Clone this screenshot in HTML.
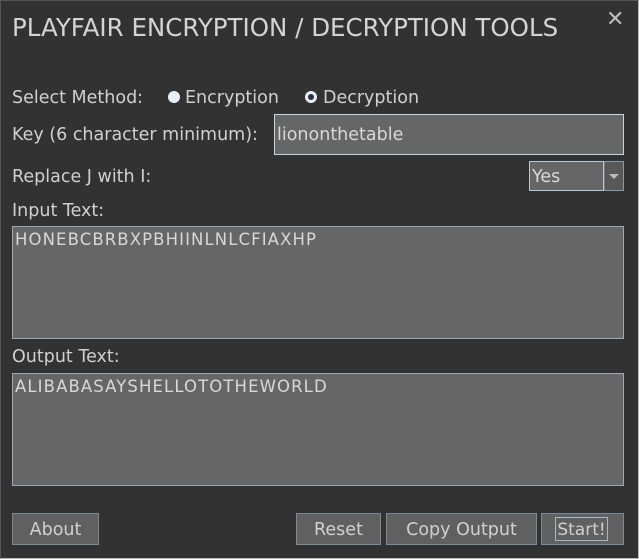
<!DOCTYPE html>
<html><head><style>
*{margin:0;padding:0;box-sizing:border-box}
html,body{width:639px;height:559px}
body{background:#323232;font-family:"DejaVu Sans","Liberation Sans",sans-serif;color:#d0d0d0;position:relative;overflow:hidden}
.frame{position:absolute;left:0;top:0;width:639px;height:559px;border:1px solid #555;border-right-color:#bbb;border-bottom-color:#bbb}
.a{position:absolute;white-space:nowrap}
.lbl{font-size:17.5px}
.box{position:absolute;background:#666;border:1px solid #9aaabb;color:#d8d8d8;font-size:17.5px}
.btn{position:absolute;background:#606060;border:1px solid #7a8a9a;font-size:17.5px;text-align:center;line-height:32px;color:#d0d0d0}
</style></head><body>
<div class="frame"></div>
<div class="a" style="left:12px;top:13px;font-size:24.5px;color:#d4d4d4">PLAYFAIR ENCRYPTION / DECRYPTION TOOLS</div>
<div class="a" style="left:606px;top:7px;font-size:22px;font-weight:bold;color:#bbb">✕</div>
<div class="a lbl" style="left:12px;top:88px">Select Method:</div>
<div class="a" style="left:168px;top:91px;width:12px;height:12px;border-radius:50%;background:#e8eef6"></div>
<div class="a lbl" style="left:185px;top:88px">Encryption</div>
<div class="a" style="left:305px;top:91px;width:12px;height:12px;border-radius:50%;background:#e8eef6"></div>
<div class="a" style="left:308px;top:94px;width:6px;height:6px;border-radius:50%;background:#2a3040"></div>
<div class="a lbl" style="left:323px;top:88px">Decryption</div>
<div class="a lbl" style="left:12px;top:125px">Key (6 character minimum):</div>
<div class="box" style="left:274px;top:114px;width:350px;height:41px;border-color:#c8d4e0;padding:10px 0 0 2px">liononthetable</div>
<div class="a lbl" style="left:12px;top:167px">Replace J with I:</div>
<div class="box" style="left:529px;top:161px;width:95px;height:30px;border-color:#8a9ab0;padding:5px 0 0 2px">Yes</div>
<div class="a" style="left:529px;top:161px;width:75px;height:30px;border:1px solid #b8c8dc"></div>
<div class="a" style="left:604px;top:162px;width:19px;height:28px;background:#585858;border-left:1px solid #777"></div>
<div class="a" style="left:609px;top:174px;border-left:5px solid transparent;border-right:5px solid transparent;border-top:5px solid #bbb"></div>
<div class="a lbl" style="left:12px;top:201px">Input Text:</div>
<div class="box" style="left:12px;top:226px;width:612px;height:113px;padding:3px 0 0 2px;font-size:16.5px;letter-spacing:1.1px">HONEBCBRBXPBHIINLNLCFIAXHP</div>
<div class="a lbl" style="left:12px;top:347px">Output Text:</div>
<div class="box" style="left:12px;top:373px;width:612px;height:113px;padding:3px 0 0 2px;font-size:16.5px;letter-spacing:1.1px">ALIBABASAYSHELLOTOTHEWORLD</div>
<div class="btn" style="left:12px;top:513px;width:87px;height:32px">About</div>
<div class="btn" style="left:296px;top:513px;width:85px;height:32px">Reset</div>
<div class="btn" style="left:386px;top:513px;width:151px;height:32px">Copy Output</div>
<div class="btn" style="left:541px;top:513px;width:83px;height:32px"></div>
<div class="a" style="left:555px;top:517px;width:53px;height:24px;border:1px solid #a8b8cc;font-size:17px;text-align:center;line-height:24px">Start!</div>
</body></html>
